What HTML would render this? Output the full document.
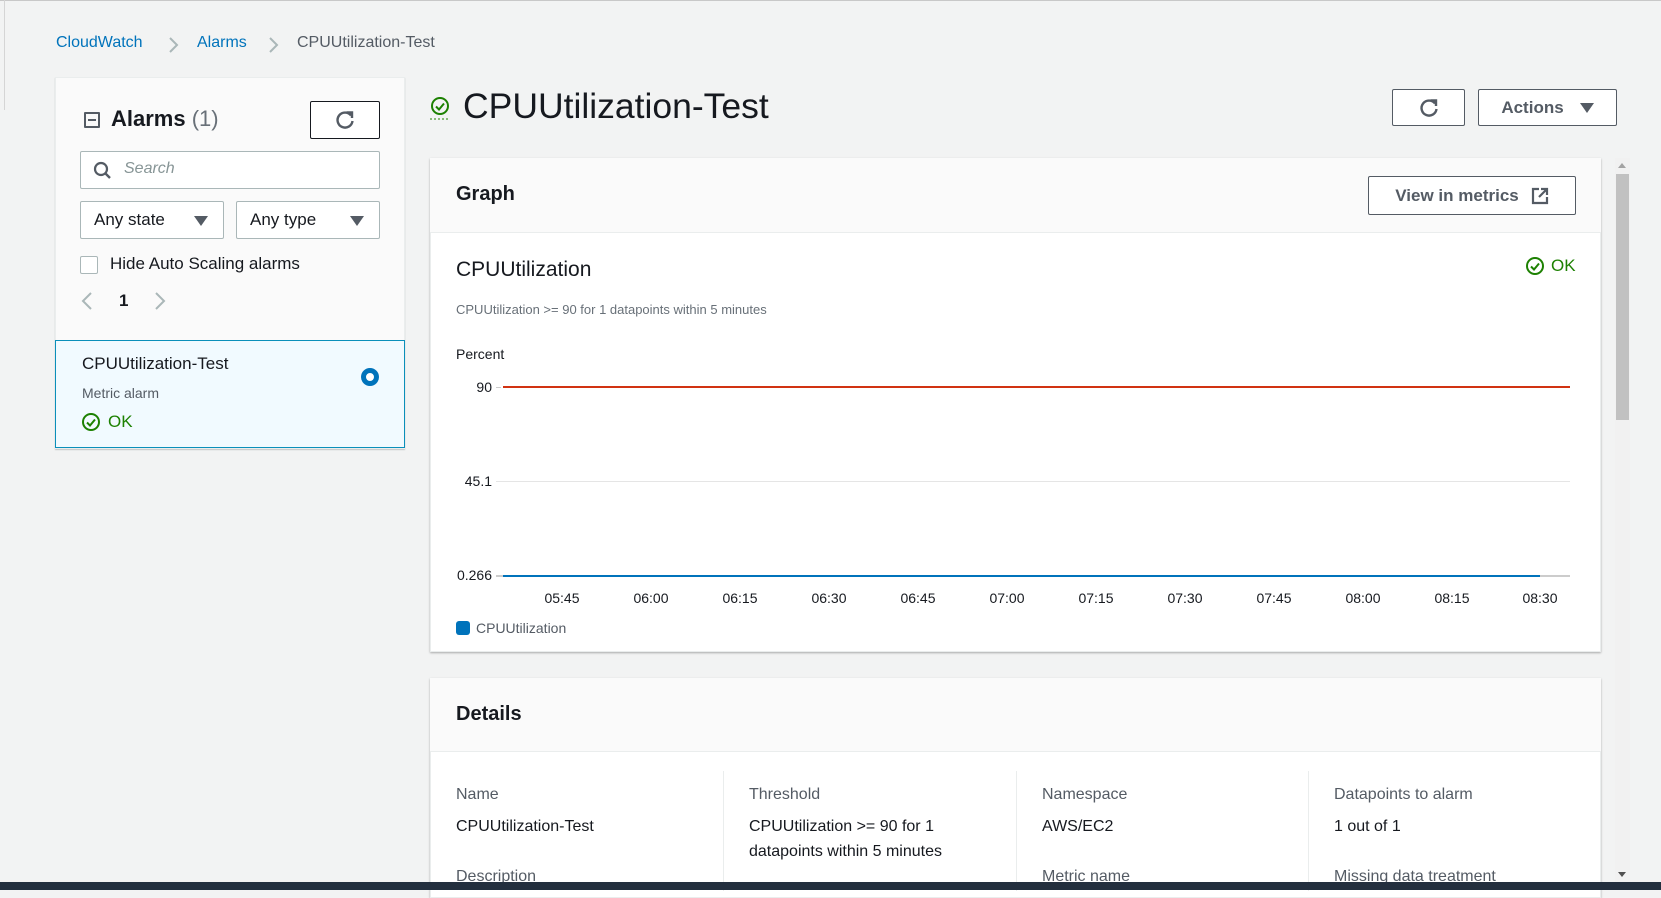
<!DOCTYPE html>
<html><head><meta charset="utf-8"><style>
*{box-sizing:border-box;margin:0;padding:0}
body{width:1661px;height:890px;overflow:hidden;background:#f2f3f3;font-family:"Liberation Sans",Arial,sans-serif;color:#16191f;position:relative}
.a{position:absolute}
.btn{position:absolute;border:1px solid #545b64;border-radius:2px;background:#fff;display:flex;align-items:center;justify-content:center;font-weight:bold;color:#545b64;font-size:17px}
.lbl{font-size:16px;color:#545b64}
.val{font-size:16px;color:#16191f}
.xt{position:absolute;top:590px;font-size:14px;color:#16191f;width:60px;margin-left:-30px;text-align:center}
</style></head><body>
<div class="a" style="left:0;top:0;width:1661px;height:1px;background:#c8c8c8"></div>
<div class="a" style="left:4px;top:0;width:1px;height:110px;background:#d5d5d5"></div>
<div class="a" style="left:56px;top:34px;font-size:16px;color:#0073bb">CloudWatch</div>
<svg class="a" style="left:168px;top:36px" width="12" height="18"><path d="M2 2l7 7-7 7" fill="none" stroke="#aab7b8" stroke-width="2"/></svg>
<div class="a" style="left:197px;top:34px;font-size:16px;color:#0073bb">Alarms</div>
<svg class="a" style="left:268px;top:36px" width="12" height="18"><path d="M2 2l7 7-7 7" fill="none" stroke="#aab7b8" stroke-width="2"/></svg>
<div class="a" style="left:297px;top:34px;font-size:16px;color:#545b64">CPUUtilization-Test</div>

<!-- left panel -->
<div class="a" style="left:55px;top:77px;width:350px;height:372px;background:#fafafa;box-shadow:0 1px 1px rgba(0,0,0,.2);border:1px solid #eaeded"></div>
<div class="a" style="left:84px;top:112px;width:16px;height:16px;border:2px solid #545b64;border-radius:1px"><div style="position:absolute;left:2px;top:5px;width:8px;height:2px;background:#545b64"></div></div>
<div class="a" style="left:111px;top:106px;font-size:22px;font-weight:bold">Alarms <span style="font-weight:normal;color:#687078">(1)</span></div>
<div class="btn" style="left:310px;top:101px;width:70px;height:38px;border-color:#16191f"><svg width="22" height="22" viewBox="0 0 22 22"><path d="M17 6.5A7.5 7.5 0 1 0 18.5 12" fill="none" stroke="#545b64" stroke-width="2.4"/><path d="M12.5 3.5L18 3.5 18 9" fill="none" stroke="#545b64" stroke-width="2.4"/></svg></div>
<div class="a" style="left:80px;top:151px;width:300px;height:38px;border:1px solid #aab7b8;border-radius:2px;background:#fff"></div>
<svg class="a" style="left:93px;top:161px" width="19" height="19"><circle cx="8" cy="8" r="6" fill="none" stroke="#545b64" stroke-width="2.2"/><path d="M12 12l5 5" stroke="#545b64" stroke-width="2.4"/></svg>
<div class="a" style="left:124px;top:160px;font-size:16px;font-style:italic;color:#879596">Search</div>
<div class="a" style="left:80px;top:201px;width:144px;height:38px;border:1px solid #aab7b8;border-radius:2px;background:#fff"></div>
<div class="a" style="left:94px;top:210px;font-size:17px">Any state</div>
<div class="a" style="left:194px;top:216px;border-left:7px solid transparent;border-right:7px solid transparent;border-top:10px solid #545b64"></div>
<div class="a" style="left:236px;top:201px;width:144px;height:38px;border:1px solid #aab7b8;border-radius:2px;background:#fff"></div>
<div class="a" style="left:250px;top:210px;font-size:17px">Any type</div>
<div class="a" style="left:350px;top:216px;border-left:7px solid transparent;border-right:7px solid transparent;border-top:10px solid #545b64"></div>
<div class="a" style="left:80px;top:256px;width:18px;height:18px;border:1px solid #aab7b8;border-radius:2px;background:#fff"></div>
<div class="a" style="left:110px;top:254px;font-size:17px">Hide Auto Scaling alarms</div>
<svg class="a" style="left:80px;top:291px" width="14" height="20"><path d="M11 2L3 10l8 8" fill="none" stroke="#aab7b8" stroke-width="2"/></svg>
<div class="a" style="left:119px;top:291px;font-size:17px;font-weight:bold">1</div>
<svg class="a" style="left:153px;top:291px" width="14" height="20"><path d="M3 2l8 8-8 8" fill="none" stroke="#aab7b8" stroke-width="2"/></svg>
<div class="a" style="left:55px;top:340px;width:350px;height:108px;background:#f1faff;border:1px solid #0a8fba"></div>
<div class="a" style="left:82px;top:354px;font-size:17px">CPUUtilization-Test</div>
<div class="a" style="left:82px;top:385px;font-size:14px;color:#545b64">Metric alarm</div>
<svg class="a" style="left:81px;top:412px" width="20" height="20"><circle cx="10" cy="10" r="8" fill="none" stroke="#1d8102" stroke-width="2"/><path d="M6 10.5l3 3 5-6" fill="none" stroke="#1d8102" stroke-width="2"/></svg>
<div class="a" style="left:108px;top:412px;font-size:17px;color:#1d8102">OK</div>
<div class="a" style="left:361px;top:368px;width:18px;height:18px;border-radius:50%;border:5px solid #0073bb;background:#fff"></div>

<!-- title -->
<svg class="a" style="left:430px;top:96px" width="22" height="26"><circle cx="10" cy="10" r="8" fill="none" stroke="#1d8102" stroke-width="2"/><path d="M6 10.5l3 3 5-6" fill="none" stroke="#1d8102" stroke-width="2"/><path d="M0 23h20" stroke="#1d8102" stroke-dasharray="2 2"/></svg>
<div class="a" style="left:463px;top:86px;font-size:35.5px">CPUUtilization-Test</div>
<div class="btn" style="left:1392px;top:89px;width:73px;height:37px"><svg width="22" height="22" viewBox="0 0 22 22"><path d="M17 6.5A7.5 7.5 0 1 0 18.5 12" fill="none" stroke="#545b64" stroke-width="2.4"/><path d="M12.5 3.5L18 3.5 18 9" fill="none" stroke="#545b64" stroke-width="2.4"/></svg></div>
<div class="btn" style="left:1478px;top:89px;width:139px;height:37px">Actions<span style="margin-left:16px;border-left:7px solid transparent;border-right:7px solid transparent;border-top:10px solid #545b64"></span></div>

<!-- graph panel -->
<div class="a" style="left:430px;top:158px;width:1171px;height:494px;background:#fff;box-shadow:0 1px 2px rgba(0,0,0,.3);border:1px solid #eaeded"></div>
<div class="a" style="left:430px;top:158px;width:1171px;height:75px;background:#fafafa;border-bottom:1px solid #eaeded"></div>
<div class="a" style="left:456px;top:183px;font-size:20px;font-weight:bold">Graph</div>
<div class="btn" style="left:1368px;top:176px;width:208px;height:39px">View in metrics<svg style="margin-left:12px" width="18" height="18"><path d="M8 2H2v14h14v-6" fill="none" stroke="#545b64" stroke-width="2.2"/><path d="M10 2h6v6M16 2L8 10" fill="none" stroke="#545b64" stroke-width="2.2"/></svg></div>
<div class="a" style="left:456px;top:258px;font-size:21px">CPUUtilization</div>
<svg class="a" style="left:1525px;top:256px" width="20" height="20"><circle cx="10" cy="10" r="8" fill="none" stroke="#1d8102" stroke-width="2"/><path d="M6 10.5l3 3 5-6" fill="none" stroke="#1d8102" stroke-width="2"/></svg>
<div class="a" style="left:1551px;top:256px;font-size:17px;color:#1d8102">OK</div>
<div class="a" style="left:456px;top:302px;font-size:13px;color:#687078">CPUUtilization &gt;= 90 for 1 datapoints within 5 minutes</div>
<div class="a" style="left:456px;top:346px;font-size:14px;color:#16191f">Percent</div>
<div class="a" style="left:440px;top:379px;width:52px;text-align:right;font-size:14px">90</div>
<div class="a" style="left:440px;top:473px;width:52px;text-align:right;font-size:14px">45.1</div>
<div class="a" style="left:440px;top:567px;width:52px;text-align:right;font-size:14px">0.266</div>
<div class="a" style="left:496px;top:481px;width:1074px;height:1px;background:#e5e5e5"></div>
<div class="a" style="left:496px;top:387px;width:5px;height:1px;background:#ccc"></div>
<div class="a" style="left:503px;top:386px;width:1067px;height:2px;background:#d13212"></div>
<div class="a" style="left:496px;top:575px;width:1074px;height:2px;background:#ccc"></div>
<div class="a" style="left:503px;top:575px;width:1037px;height:2px;background:#0073bb"></div>
<div class="xt" style="left:562px">05:45</div><div class="xt" style="left:651px">06:00</div><div class="xt" style="left:740px">06:15</div><div class="xt" style="left:829px">06:30</div><div class="xt" style="left:918px">06:45</div><div class="xt" style="left:1007px">07:00</div><div class="xt" style="left:1096px">07:15</div><div class="xt" style="left:1185px">07:30</div><div class="xt" style="left:1274px">07:45</div><div class="xt" style="left:1363px">08:00</div><div class="xt" style="left:1452px">08:15</div><div class="xt" style="left:1540px">08:30</div>
<div class="a" style="left:456px;top:621px;width:14px;height:14px;border-radius:3px;background:#0073bb"></div>
<div class="a" style="left:476px;top:620px;font-size:14px;color:#545b64">CPUUtilization</div>

<!-- details -->
<div class="a" style="left:430px;top:678px;width:1171px;height:220px;background:#fff;box-shadow:0 1px 2px rgba(0,0,0,.3);border:1px solid #eaeded"></div>
<div class="a" style="left:430px;top:678px;width:1171px;height:74px;background:#fafafa;border-bottom:1px solid #eaeded"></div>
<div class="a" style="left:456px;top:703px;font-size:20px;font-weight:bold">Details</div>
<div class="a" style="left:723px;top:771px;width:1px;height:120px;background:#eaeded"></div>
<div class="a" style="left:1016px;top:771px;width:1px;height:120px;background:#eaeded"></div>
<div class="a" style="left:1308px;top:771px;width:1px;height:120px;background:#eaeded"></div>
<div class="a lbl" style="left:456px;top:786px">Name</div>
<div class="a val" style="left:456px;top:818px">CPUUtilization-Test</div>
<div class="a lbl" style="left:456px;top:868px">Description</div>
<div class="a lbl" style="left:749px;top:786px">Threshold</div>
<div class="a val" style="left:749px;top:818px;line-height:25px;margin-top:-4px">CPUUtilization &gt;= 90 for 1<br>datapoints within 5 minutes</div>
<div class="a lbl" style="left:1042px;top:786px">Namespace</div>
<div class="a val" style="left:1042px;top:818px">AWS/EC2</div>
<div class="a lbl" style="left:1042px;top:868px">Metric name</div>
<div class="a lbl" style="left:1334px;top:786px">Datapoints to alarm</div>
<div class="a val" style="left:1334px;top:818px">1 out of 1</div>
<div class="a lbl" style="left:1334px;top:868px">Missing data treatment</div>

<!-- scrollbar -->
<div class="a" style="left:1615px;top:158px;width:15px;height:724px;background:#f1f1f1"></div>
<div class="a" style="left:1616px;top:174px;width:13px;height:246px;background:#c1c1c1"></div>
<div class="a" style="left:1618px;top:163px;border-left:4px solid transparent;border-right:4px solid transparent;border-bottom:5px solid #a3a3a3"></div>
<div class="a" style="left:1618px;top:872px;border-left:4px solid transparent;border-right:4px solid transparent;border-top:5px solid #505050"></div>
<div class="a" style="left:0;top:882px;width:1661px;height:8px;background:#232f3e"></div>
</body></html>
